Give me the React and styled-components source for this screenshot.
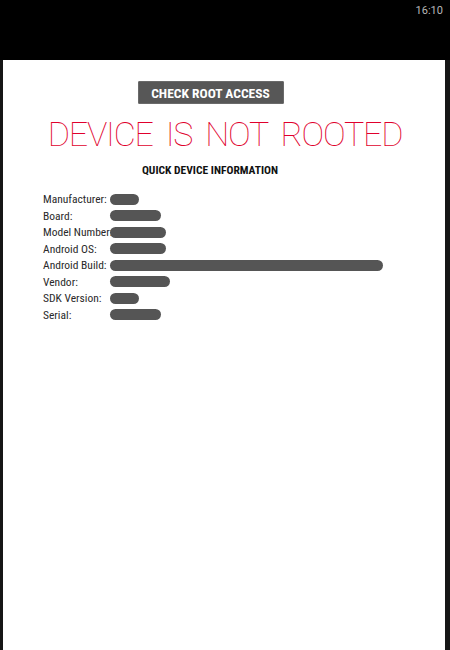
import styled, { createGlobalStyle } from "styled-components";

const GlobalStyle = createGlobalStyle`
  html, body {
    margin: 0;
    padding: 0;
    background: #161616;
  }
`;

const deviceInfo = [
  { label: "Manufacturer:", width: 29 },
  { label: "Board:", width: 51 },
  { label: "Model Number:", width: 56 },
  { label: "Android OS:", width: 56 },
  { label: "Android Build:", width: 273 },
  { label: "Vendor:", width: 60 },
  { label: "SDK Version:", width: 29 },
  { label: "Serial:", width: 51 },
];

export default function App() {
  return (
    <>
      <GlobalStyle />
      <Device>
        <StatusBar>
          <Clock>16:10</Clock>
        </StatusBar>
        <Bezel>
          <Screen>
            <CheckButton>CHECK ROOT ACCESS</CheckButton>
            <Status>DEVICE IS NOT ROOTED</Status>
            <SectionTitle>QUICK DEVICE INFORMATION</SectionTitle>
            <InfoList>
              {deviceInfo.map((row) => (
                <InfoRow key={row.label}>
                  <Label>{row.label}</Label>
                  <Redacted $width={row.width} />
                </InfoRow>
              ))}
            </InfoList>
          </Screen>
        </Bezel>
      </Device>
    </>
  );
}

const Device = styled.div`
  width: 450px;
  height: 650px;
  display: flex;
  flex-direction: column;
  background: #161616;
`;

const StatusBar = styled.div`
  height: 60px;
  background: #000;
  display: flex;
  justify-content: flex-end;
  align-items: flex-start;
  padding: 4px 7px 0 0;
  box-sizing: border-box;
`;

const Clock = styled.span`
  font-family: Roboto, "Open Sans", sans-serif;
  font-size: 11px;
  color: #b8b8b8;
`;

const Bezel = styled.div`
  flex: 1;
  display: flex;
  padding: 0 5px 0 3px;
`;

const Screen = styled.div`
  flex: 1;
  background: #fff;
  display: flex;
  flex-direction: column;
  align-items: center;
  padding-top: 21px;
`;

const CheckButton = styled.button`
  width: 146px;
  height: 23px;
  margin-right: 27px;
  border: 1px solid #6a6a6a;
  border-radius: 1px;
  background: #575757;
  color: #fff;
  font-family: "Liberation Sans Narrow", "Roboto Condensed", Roboto, sans-serif;
  font-weight: 700;
  font-size: 13.5px;
  padding: 0;
  cursor: pointer;
`;

const Status = styled.h1`
  margin: 10px 0 0 2px;
  font-family: Roboto, sans-serif;
  font-weight: 100;
  font-size: 34px;
  line-height: 40px;
  letter-spacing: -1.2px;
  word-spacing: 6px;
  color: #e0002c;
`;

const SectionTitle = styled.h2`
  margin: 8px 28px 0 0;
  font-family: "Liberation Sans Narrow", "Roboto Condensed", Roboto, sans-serif;
  font-weight: 700;
  font-size: 11.5px;
  line-height: 16px;
  color: #111;
`;

const InfoList = styled.div`
  align-self: stretch;
  display: flex;
  flex-direction: column;
  padding: 13px 0 0 40px;
`;

const InfoRow = styled.div`
  display: flex;
  align-items: center;
  height: 16.5px;
`;

const Label = styled.span`
  width: 67px;
  flex: none;
  font-family: "Liberation Sans Narrow", "Roboto Condensed", Roboto, sans-serif;
  font-size: 11.5px;
  color: #2a2a2a;
  white-space: nowrap;
`;

const Redacted = styled.span`
  width: ${(p) => p.$width}px;
  height: 11px;
  border-radius: 6px;
  background: #555;
`;
